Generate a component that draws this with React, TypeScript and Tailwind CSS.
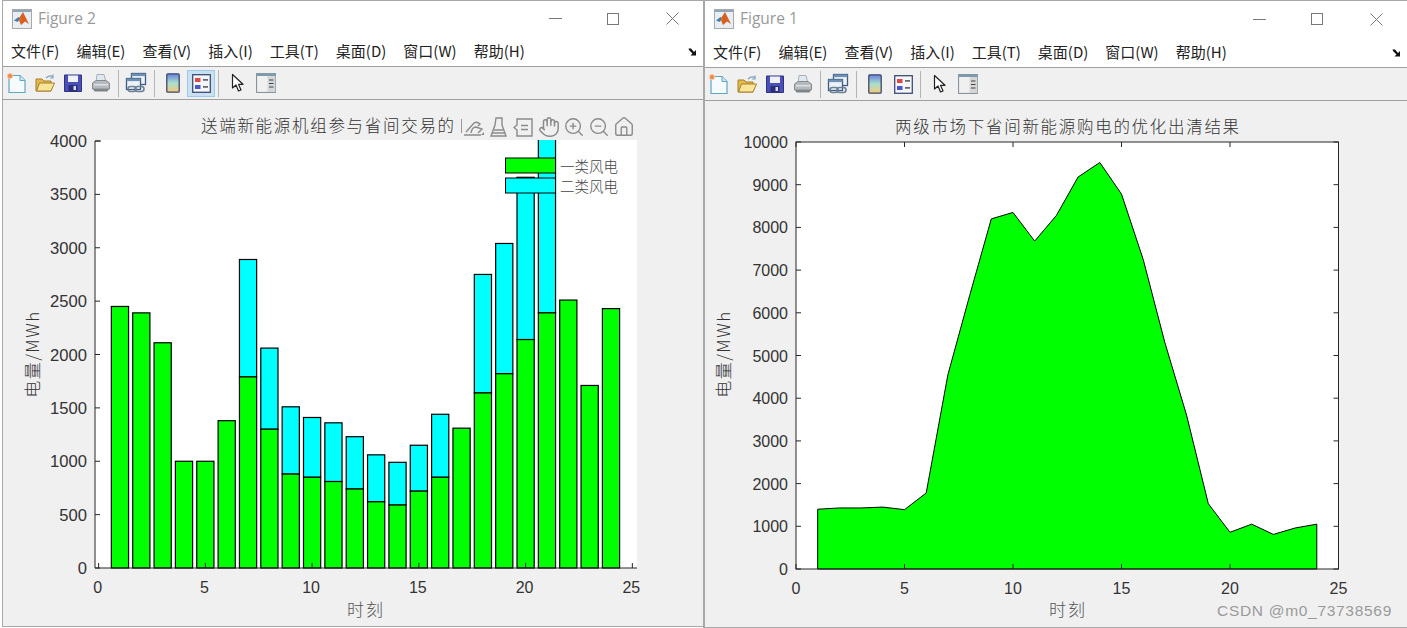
import { Hand, ZoomIn, ZoomOut, House } from "lucide-react";

const CN = { fontFamily: '"Noto Sans CJK SC","Liberation Sans",sans-serif' };

function MatlabLogo() {
  return (
    <svg width="20" height="20" viewBox="0 0 20 20">
      <rect x="0.5" y="0.5" width="19" height="19" fill="#e8eef3" stroke="#a9a9a9" />
      <rect x="1" y="1" width="18" height="2" fill="#8fa6b8" />
      <path d="M2 11.5 L6.5 8 L8.5 9.5 L5.5 13 Z" fill="#3d7fb5" />
      <path d="M6.5 10 L11 3 L14 9 L17 15 L13 12.5 L9 16 Z" fill="#d95f1e" />
      <path d="M11 3 L8.5 10.5 L6 13 L9 9 Z" fill="#f0a030" />
    </svg>
  );
}

function ToolIcon({ kind, id }: { kind: string; id: string }) {
  if (kind === "new")
    return (
      <svg width="22" height="22" viewBox="0 0 22 22">
        <path d="M3 3.5 H14 L19 8.5 V20.5 H3 Z" fill="#f5fbff" stroke="#5fa6c7" strokeWidth="1.2" />
        <path d="M14 3.5 V8.5 H19" fill="#cfe6f2" stroke="#5fa6c7" />
        <circle cx="4" cy="4" r="2.6" fill="#f08a4a" stroke="#f4c9a0" />
      </svg>
    );
  if (kind === "open")
    return (
      <svg width="22" height="22" viewBox="0 0 22 22">
        <path d="M2 19 V7 H8 L10 9 H17 V19 Z" fill="#e3b94f" stroke="#a87f26" />
        <path d="M2.5 19 L5.5 11 H20.5 L17 19 Z" fill="#f9e59a" stroke="#a87f26" />
        <path d="M12 6 Q16 2.5 19 5 M19 2.5 V6 H16" fill="none" stroke="#7ea3bd" strokeWidth="1.2" />
      </svg>
    );
  if (kind === "save")
    return (
      <svg width="20" height="20" viewBox="0 0 20 20">
        <path d="M1.5 2 H18.5 V18.5 H1.5 Z" fill="#4a50b8" stroke="#2e3280" />
        <rect x="5" y="2.5" width="10" height="6.5" fill="#eef1fa" />
        <rect x="5.5" y="12" width="9" height="6" fill="#2a2e78" />
        <rect x="10.5" y="13" width="2.5" height="4" fill="#d8dbef" />
      </svg>
    );
  if (kind === "print")
    return (
      <svg width="20" height="20" viewBox="0 0 20 20">
        <path d="M6 1.5 H13 L15 9 H5 Z" fill="#dfe8ef" stroke="#a3b0bb" />
        <path d="M1.5 10 L5 7.5 H15 L18.5 10 V16 H1.5 Z" fill="#b5babe" stroke="#868c91" />
        <path d="M2 16 H18 L16.5 18.5 H3.5 Z" fill="#7f8488" />
        <rect x="3" y="11" width="14" height="1.5" fill="#dfe2e4" />
      </svg>
    );
  if (kind === "link")
    return (
      <svg width="22" height="22" viewBox="0 0 22 22">
        <rect x="6.5" y="1.5" width="14" height="11" fill="#eef2f6" stroke="#3d5c85" strokeWidth="1.3" />
        <rect x="6.5" y="1.5" width="14" height="2.6" fill="#6f8fb3" />
        <rect x="1.5" y="6.5" width="14" height="11" fill="#eef2f6" stroke="#3d5c85" strokeWidth="1.3" />
        <rect x="1.5" y="6.5" width="14" height="2.6" fill="#6f8fb3" />
        <rect x="3" y="14.5" width="8" height="5" rx="2.5" fill="none" stroke="#6d8196" strokeWidth="1.6" />
        <rect x="10" y="14.5" width="9" height="5" rx="2.5" fill="none" stroke="#6d8196" strokeWidth="1.6" />
      </svg>
    );
  if (kind === "colorbar")
    return (
      <svg width="14" height="20" viewBox="0 0 14 20">
        <defs>
          <linearGradient id={id} x1="0" y1="0" x2="0" y2="1">
            <stop offset="0" stopColor="#6a7fe0" />
            <stop offset="0.5" stopColor="#a8e0cc" />
            <stop offset="1" stopColor="#f8c878" />
          </linearGradient>
        </defs>
        <rect x="0.8" y="0.8" width="12.4" height="18.4" rx="1" fill={`url(#${id})`} stroke="#3c4a68" strokeWidth="1.3" />
      </svg>
    );
  if (kind === "legend")
    return (
      <svg width="19" height="19" viewBox="0 0 19 19">
        <rect x="0.7" y="0.7" width="17.6" height="17.6" fill="#f4f6fa" stroke="#3d4d73" strokeWidth="1.3" />
        <rect x="3" y="4" width="5.5" height="4" fill="#e04848" />
        <rect x="3" y="11" width="5.5" height="4" fill="#4a55d0" />
        <rect x="11" y="5.2" width="5" height="1.4" fill="#444" />
        <rect x="11" y="12.2" width="5" height="1.4" fill="#444" />
      </svg>
    );
  if (kind === "cursor")
    return (
      <svg width="14" height="20" viewBox="0 0 14 20">
        <path d="M1.5 1.5 V15 L5 12 L7.5 18 L10 17 L7.5 11.3 H12 Z" fill="#fff" stroke="#222" strokeWidth="1.2" strokeLinejoin="round" />
      </svg>
    );
  return (
    <svg width="20" height="20" viewBox="0 0 20 20">
      <rect x="0.6" y="0.6" width="18.8" height="18.8" fill="#f0f0f0" stroke="#7d8a94" />
      <rect x="0.6" y="0.6" width="18.8" height="2.4" fill="#7d9ab0" />
      <rect x="11.5" y="3" width="7.8" height="16" fill="#d4d6d8" />
      <path d="M13 7 H17.5 M13 10.5 H17.5 M13 14 H17.5" stroke="#444" strokeWidth="1.2" />
    </svg>
  );
}

const Sep = ({ w }: { w: string }) => <span className={`h-[27px] w-px bg-[#b4b4b4] ${w}`} />;

function Slot({ kind, active, id }: { kind: string; active?: boolean; id: string }) {
  return (
    <span className={`flex h-[27px] w-[28px] items-center justify-center ${active ? "border border-[#9ccbe8] bg-[#c8e0f2]" : ""}`}>
      <ToolIcon kind={kind} id={`${id}-${kind}`} />
    </span>
  );
}

function Toolbar({ active, id }: { active: boolean; id: string }) {
  return (
    <div className="flex h-[33px] shrink-0 items-center border-b border-[#a0a0a0] bg-[#f0f0f0]">
      <Slot id={id} kind="new" />
      <Slot id={id} kind="open" />
      <Slot id={id} kind="save" />
      <Slot id={id} kind="print" />
      <Sep w="mr-[3px] ml-[3px]" />
      <Slot id={id} kind="link" />
      <Sep w="mr-[4px] ml-[4px]" />
      <Slot id={id} kind="colorbar" />
      <Slot id={id} kind="legend" active={active} />
      <Sep w="mr-[5px] ml-[3px]" />
      <Slot id={id} kind="cursor" />
      <Slot id={id} kind="pane" />
    </div>
  );
}

const MENUS = ["文件(F)", "编辑(E)", "查看(V)", "插入(I)", "工具(T)", "桌面(D)", "窗口(W)", "帮助(H)"];

function Chrome({ title, active, children, left }: { title: string; active: boolean; children: React.ReactNode; left?: boolean }) {
  return (
    <div className={`flex shrink-0 flex-col border-t border-b border-[#a8a8a8] bg-white ${left ? "h-[627px] w-[701px] border-l" : "h-[628px] w-[702px]"}`}>
      <div className={`flex shrink-0 items-center bg-white pl-[9px] ${left ? "h-[35px]" : "h-[36px]"}`}>
        <MatlabLogo />
        <span className="ml-[6px] text-[15.5px] text-[#999999]" style={{ fontFamily: '"Open Sans","Noto Sans",sans-serif' }}>
          {title}
        </span>
        <div className="ml-auto flex items-center">
          <span className="mr-[45px] h-px w-[13px] bg-[#777]" />
          <span className="mr-[47px] h-[12px] w-[12px] border border-[#777]" />
          <svg width="13" height="13" viewBox="0 0 13 13" className="mr-[24px]">
            <path d="M0.5 0.5 L12.5 12.5 M12.5 0.5 L0.5 12.5" stroke="#777" strokeWidth="1" />
          </svg>
        </div>
      </div>
      <div className="relative flex h-[31px] shrink-0 items-center gap-[17px] border-b border-[#a0a0a0] bg-white pl-[8px] text-[15px] text-[#222]" style={CN}>
        {MENUS.map((m) => (
          <span key={m}>{m}</span>
        ))}
        <svg width="10" height="10" viewBox="0 0 10 10" className="absolute right-[5px] top-[11px]">
          <path d="M0.5 1.5 L3 1.5 L6 5 L8 3 V8.5 H2.5 L4.5 6.5 L1 3 Z" fill="#111" />
        </svg>
      </div>
      <Toolbar active={active} id={title.replace(" ", "")} />
      <div className="relative min-h-0 flex-1 overflow-hidden bg-[#f0f0f0]">{children}</div>
    </div>
  );
}

const TXT = "#333333";
const FS = '"Liberation Sans",Arial,sans-serif';
const CJK = '"Noto Sans CJK SC",sans-serif';

const LEFT = {
  x0: 98.6, xs: 21.35,
  y0: 468, ys: 427 / 4000,
};
const BARS: [number, number][] = [
  [2450, 0], [2390, 0], [2110, 0], [1000, 0], [1000, 0], [1380, 0],
  [1790, 2890], [1300, 2060], [880, 1510], [850, 1410], [810, 1360], [740, 1230],
  [620, 1060], [590, 990], [720, 1150], [850, 1440], [1310, 0], [1640, 2750],
  [1820, 3040], [2140, 3660], [2390, 4400], [2510, 0], [1710, 0], [2430, 0],
];

function LeftChart() {
  const { x0, xs, y0, ys } = LEFT;
  const yOf = (v: number) => y0 - v * ys;
  const xOf = (v: number) => x0 + v * xs;
  return (
    <svg width="703" height="528" className="absolute left-[-3px] top-0">
      <defs>
        <clipPath id="leftclip">
          <rect x="92" y="40" width="546" height="430" />
        </clipPath>
      </defs>
      <rect x="95" y="40" width="542" height="428" fill="#fff" />
      <g clipPath="url(#leftclip)" stroke="#000" strokeWidth="1.2">
        {BARS.map(([g, t], i) => {
          const x = xOf(i + 1) - 8.6;
          return (
            <g key={i}>
              {t > 0 && <rect x={x} y={yOf(t)} width={17.2} height={yOf(g) - yOf(t)} fill="#00ffff" />}
              <rect x={x} y={yOf(g)} width={17.2} height={y0 - yOf(g)} fill="#00ff00" />
            </g>
          );
        })}
      </g>
      <path d={`M101 41 H95 V${y0} H637`} fill="none" stroke="#262626" strokeWidth="1" />
      {[0, 500, 1000, 1500, 2000, 2500, 3000, 3500, 4000].map((v) => (
        <g key={v}>
          <path d={`M95 ${yOf(v)} H100`} stroke="#262626" />
          <text x="87" y={yOf(v) + 6} textAnchor="end" fontSize="16.6" fill={TXT} fontFamily={FS}>
            {v}
          </text>
        </g>
      ))}
      {[0, 5, 10, 15, 20, 25].map((v) => (
        <g key={v}>
          <path d={`M${xOf(v)} ${y0} V${y0 - 5}`} stroke="#262626" />
          <text x={xOf(v) - 1} y={y0 + 25} textAnchor="middle" fontSize="16" fill={TXT} fontFamily={FS}>
            {v}
          </text>
        </g>
      ))}
      <text x="366" y={y0 + 48} textAnchor="middle" fontSize="17" letterSpacing="2" fill="#555" fontFamily={CJK} fontWeight="300">
        时刻
      </text>
      <text transform="translate(39 254) rotate(-90)" textAnchor="middle" fontSize="17" letterSpacing="1.5" fill="#333" fontFamily={CJK} fontWeight="300">
        电量/MWh
      </text>
      <text x="201" y="32" fontSize="16.5" letterSpacing="1.7" fill="#333" fontFamily={CJK} fontWeight="300">
        送端新能源机组参与省间交易的
      </text>
      <rect x="505.5" y="58" width="50" height="15" fill="#00ff00" stroke="#000" />
      <rect x="505.5" y="78" width="50" height="15" fill="#00ffff" stroke="#000" />
      <text x="560" y="72" fontSize="14.5" fill="#444" fontFamily={CJK} fontWeight="300">
        一类风电
      </text>
      <text x="560" y="92" fontSize="14.5" fill="#444" fontFamily={CJK} fontWeight="300">
        二类风电
      </text>
      <rect x="461" y="19" width="1" height="14" fill="#999" />
    </svg>
  );
}

function AxesTools() {
  return (
    <div className="absolute left-[460px] top-[16px] flex items-center gap-[3px] text-[#8a8a8a]">
      <svg width="22" height="22" viewBox="0 0 22 22" fill="none" stroke="currentColor" strokeWidth="1.4">
        <path d="M1 19 H18 M3 16 L11 7 Q14 5 17 8 L15 10 M8 17 Q9 11 13 11 L19 13 L15 17" />
        <path d="M18 19 L21 19 L21 16 Z" fill="currentColor" stroke="none" />
      </svg>
      <svg width="22" height="22" viewBox="0 0 22 22" fill="none" stroke="currentColor" strokeWidth="1.4">
        <path d="M8 2 H14 V9 L18 20 H3 L7 9 Z" />
        <path d="M6 14 H15 M4 17 H17" />
      </svg>
      <svg width="22" height="22" viewBox="0 0 22 22" fill="none" stroke="currentColor" strokeWidth="1.4">
        <path d="M4 3 H19 V20 H4 V14 L1 11.5 L4 9 Z" />
        <path d="M8 9.5 H15 M8 13.5 H15" />
      </svg>
      <Hand size={22} strokeWidth={1.6} />
      <ZoomIn size={22} strokeWidth={1.5} />
      <ZoomOut size={22} strokeWidth={1.5} />
      <House size={22} strokeWidth={1.5} />
    </div>
  );
}

const AREA = [1400, 1430, 1430, 1450, 1390, 1780, 4550, 6400, 8200, 8350, 7680, 8280, 9180, 9520, 8780, 7250, 5300, 3600, 1530, 860, 1050, 810, 960, 1050];

function RightChart() {
  const L = 91, R = 633.5, T = 41, B = 468;
  const xOf = (v: number) => L + (v * (R - L)) / 25;
  const yOf = (v: number) => B - (v * (B - T)) / 10000;
  const pts = AREA.map((v, i) => `${xOf(i + 1)},${yOf(v)}`).join(" ");
  return (
    <svg width="702" height="528" className="absolute left-0 top-0">
      <rect x={L} y={T} width={R - L} height={B - T} fill="#fff" />
      <polygon points={`${xOf(1)},${B} ${pts} ${xOf(24)},${B}`} fill="#00ff00" stroke="#000" strokeWidth="1" />
      <rect x={L} y={T} width={R - L} height={B - T} fill="none" stroke="#262626" />
      {[0, 1000, 2000, 3000, 4000, 5000, 6000, 7000, 8000, 9000, 10000].map((v) => (
        <g key={v}>
          <path d={`M${L} ${yOf(v)} H${L + 5} M${R} ${yOf(v)} H${R - 5}`} stroke="#262626" />
          <text x={L - 8} y={yOf(v) + 6} textAnchor="end" fontSize="16" fill={TXT} fontFamily={FS}>
            {v}
          </text>
        </g>
      ))}
      {[0, 5, 10, 15, 20, 25].map((v) => (
        <g key={v}>
          <path d={`M${xOf(v)} ${B} V${B - 5} M${xOf(v)} ${T} V${T + 5}`} stroke="#262626" />
          <text x={xOf(v)} y={B + 25} textAnchor="middle" fontSize="16" fill={TXT} fontFamily={FS}>
            {v}
          </text>
        </g>
      ))}
      <text x="363" y={B + 47} textAnchor="middle" fontSize="17" letterSpacing="2" fill="#555" fontFamily={CJK} fontWeight="300">
        时刻
      </text>
      <text transform="translate(25 253) rotate(-90)" textAnchor="middle" fontSize="17" letterSpacing="1.5" fill="#333" fontFamily={CJK} fontWeight="300">
        电量/MWh
      </text>
      <text x="190" y="32" fontSize="16.5" letterSpacing="1.7" fill="#333" fontFamily={CJK} fontWeight="300">
        两级市场下省间新能源购电的优化出清结果
      </text>
      <text x="512" y="515" fontSize="15.5" letterSpacing="0.7" fill="#9a9a9a" fontFamily={FS}>
        CSDN @m0_73738569
      </text>
    </svg>
  );
}

export default function App() {
  return (
    <div className="flex h-[628px] w-[1407px] overflow-hidden bg-white">
      <div className="w-[2px] shrink-0 bg-white" />
      <Chrome title="Figure 2" active left>
        <LeftChart />
        <AxesTools />
      </Chrome>
      <div className="h-[628px] w-[2px] shrink-0 bg-[#a8a8a8]" />
      <Chrome title="Figure 1" active={false}>
        <RightChart />
      </Chrome>
    </div>
  );
}
